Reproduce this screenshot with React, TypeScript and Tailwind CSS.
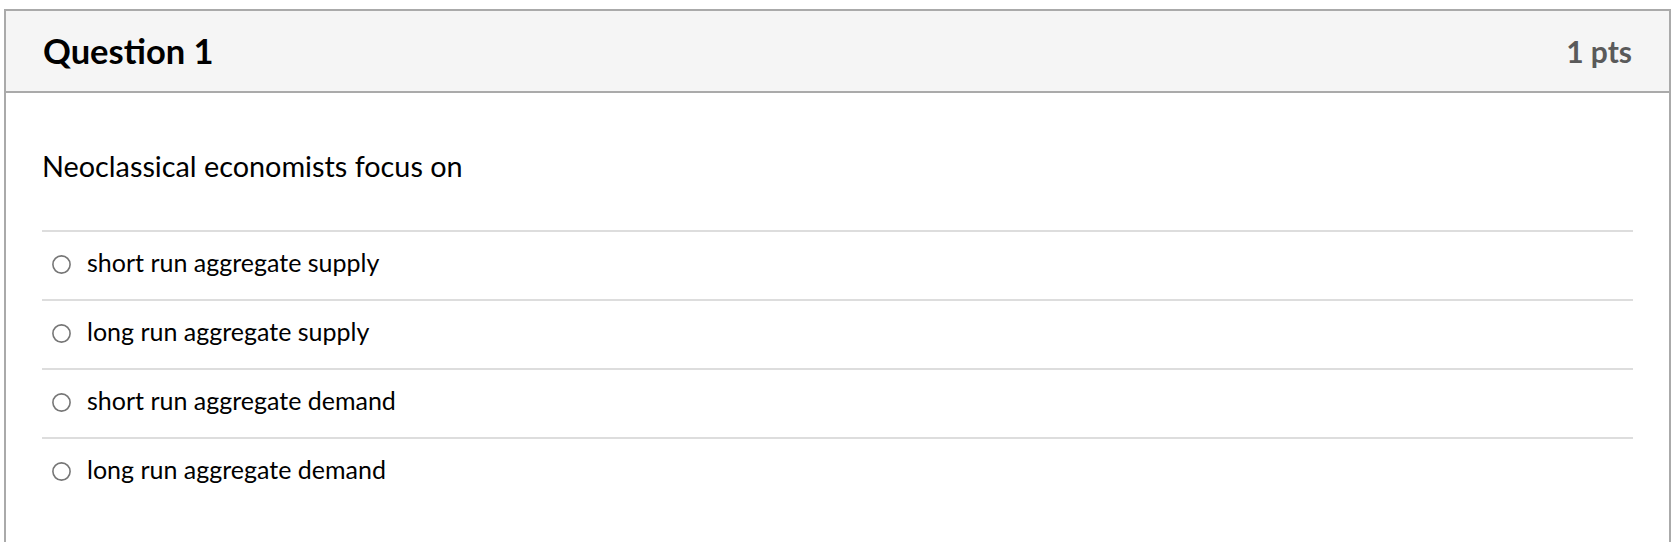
import React from "react";

const options = [
  "short run aggregate supply",
  "long run aggregate supply",
  "short run aggregate demand",
  "long run aggregate demand",
];

function Radio() {
  return (
    <svg width="19" height="19" viewBox="0 0 19 19" className="mt-[5px] shrink-0">
      <circle cx="9.5" cy="9.5" r="8.6" fill="#ffffff" stroke="#767676" strokeWidth="1.6" />
    </svg>
  );
}

export default function App() {
  return (
    <div
      className="min-h-screen bg-white pt-[9px] pl-[4px] pr-[5px]"
      style={{ fontFamily: "Lato, 'Noto Sans', sans-serif" }}
    >
      <div className="border-2 border-[#aaaaaa] bg-white">
        <div className="flex h-[82px] items-center justify-between border-b-2 border-[#aaaaaa] bg-[#f5f5f5] pl-[37px] pr-[37px]">
          <h2 className="text-[34.5px] font-bold leading-none text-black">Question 1</h2>
          <div className="text-[30px] font-bold leading-none text-[#5a5a5a]">1 pts</div>
        </div>
        <div className="px-[36px] pt-[54px] pb-[60px]">
          <p className="text-[28.8px] leading-[39px] text-black">Neoclassical economists focus on</p>
          <div className="mt-[44px]">
            {options.map((o) => (
              <div
                key={o}
                className="flex h-[69px] items-center border-t-2 border-[#dddddd] pb-[8px] pl-[10px]"
              >
                <Radio />
                <span className="ml-[16px] text-[25px] leading-[36px] text-black">{o}</span>
              </div>
            ))}
          </div>
        </div>
      </div>
    </div>
  );
}
